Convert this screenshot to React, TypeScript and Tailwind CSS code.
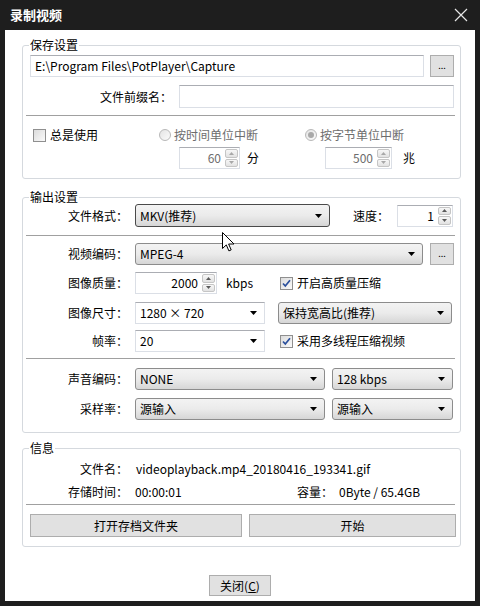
import React from "react";

function Arrow() {
  return (
    <svg width="7" height="4" viewBox="0 0 7 4" className="shrink-0">
      <path d="M0 0h7L3.5 4z" fill="#000" />
    </svg>
  );
}

function Select({ text, className, focused }: { text: string; className: string; focused?: boolean }) {
  return (
    <div
      className={`${className} h-[22px] flex items-center justify-between pl-[4px] pr-[7px] rounded-[3px] border bg-gradient-to-b from-[#f3f3f3] via-[#ebebeb] to-[#d6d6d6] ${
        focused ? "border-[#4a4a4a]" : "border-[#8c8c8c]"
      }`}
    >
      <span className="truncate">{text}</span>
      <Arrow />
    </div>
  );
}

function Combo({ text, className }: { text: string; className: string }) {
  return (
    <div className={`${className} h-[22px] flex items-center justify-between pl-[4px] pr-[7px] border border-[#dbdfe6] border-t-[#abadb3] bg-white`}>
      <span>{text}</span>
      <Arrow />
    </div>
  );
}

function SpinArrow({ up, disabled }: { up?: boolean; disabled?: boolean }) {
  return (
    <div className="flex-1 flex items-center justify-center border border-[#c5c5c5] rounded-[2px] bg-gradient-to-b from-[#f7f7f7] to-[#e2e2e2]">
      <svg width="5" height="3" viewBox="0 0 5 3">
        <path d={up ? "M0 3h5L2.5 0z" : "M0 0h5L2.5 3z"} fill={disabled ? "#a8a8a8" : "#5a5a5a"} />
      </svg>
    </div>
  );
}

function Spin({ value, className, disabled }: { value: string; className: string; disabled?: boolean }) {
  return (
    <div className={`${className} h-[22px] flex items-stretch border border-[#dbdfe6] border-t-[#abadb3] bg-white`}>
      <span className={`flex-1 flex items-center justify-end pr-[4px] ${disabled ? "text-[#6d6d6d]" : ""}`}>{value}</span>
      <div className="w-[14px] flex flex-col gap-[1px] py-[1px] pr-[1px]">
        <SpinArrow up disabled={disabled} />
        <SpinArrow disabled={disabled} />
      </div>
    </div>
  );
}

function Check({ label, checked }: { label: string; checked?: boolean }) {
  return (
    <div className="flex items-center gap-[4px]">
      <div className="w-[13px] h-[13px] border border-[#8f8f8f] bg-gradient-to-br from-[#dcdcdc] to-[#fafafa] flex items-center justify-center">
        {checked && (
          <svg width="9" height="9" viewBox="0 0 9 9">
            <path d="M1 4.5l2.3 2.5L8 1.2" stroke="#2a4f9c" strokeWidth="1.7" fill="none" />
          </svg>
        )}
      </div>
      <span>{label}</span>
    </div>
  );
}

function Radio({ label, selected }: { label: string; selected?: boolean }) {
  return (
    <div className="flex items-center gap-[3px] text-[#6d6d6d]">
      <div className="w-[12px] h-[12px] rounded-full border border-[#b8b8b8] bg-gradient-to-br from-[#e4e4e4] to-[#fbfbfb] flex items-center justify-center">
        {selected && <div className="w-[6px] h-[6px] rounded-full bg-[#a9a9a9]" />}
      </div>
      <span>{label}</span>
    </div>
  );
}

function Btn({ children, className }: { children: React.ReactNode; className: string }) {
  return (
    <div className={`${className} flex items-center justify-center border border-[#adadad] bg-[#e1e1e1]`}>{children}</div>
  );
}

function Group({ title, className, children }: { title: string; className: string; children: React.ReactNode }) {
  return (
    <div className={`${className} relative ml-[17px] mr-[14px] border border-[#d5d9de] rounded-[3px]`}>
      <span className="absolute left-[6px] top-[-9px] bg-white px-[1px] leading-[16px]">{title}</span>
      {children}
    </div>
  );
}

function Label({ text }: { text: string }) {
  return <span className="w-[105px] text-right shrink-0">{text}</span>;
}

function Sep() {
  return <div className="h-[1px] ml-[3px] mr-[5px] bg-[#a0a0a0]" />;
}

export default function App() {
  return (
    <div className="w-[480px] h-[606px] bg-[#1e1e1e] flex flex-col relative font-['Noto_Sans_CJK_SC','Noto_Sans',sans-serif] text-[12px] text-black leading-[16px]">
      {/* Title bar */}
      <div className="h-[30px] flex items-center justify-between pl-[10px] pr-[12px] text-white">
        <span className="text-[13px] font-bold">录制视频</span>
        <svg width="14" height="14" viewBox="0 0 14 14">
          <path d="M1 1l12 12M13 1L1 13" stroke="#e6e6e6" strokeWidth="1.2" />
        </svg>
      </div>

      <div className="mx-[5px] h-[571px] bg-white flex flex-col">
        {/* 保存设置 */}
        <Group title="保存设置" className="mt-[15px] h-[134px]">
          <div className="pt-[9px] flex items-center">
            <div className="ml-[7px] w-[394px] h-[22px] flex items-center pl-[4px] border border-[#dbdfe6] border-t-[#abadb3]">
              E:\Program Files\PotPlayer\Capture
            </div>
            <Btn className="ml-[6px] w-[24px] h-[22px] text-[9px]">...</Btn>
          </div>
          <div className="mt-[8px] flex items-center">
            <span className="w-[149px] text-right">文件前缀名：</span>
            <div className="ml-[7px] w-[275px] h-[23px] border border-[#dbdfe6] border-t-[#abadb3]" />
          </div>
          <div className="mt-[7px]">
            <Sep />
          </div>
          <div className="mt-[11px] h-[16px] flex items-center">
            <div className="ml-[10px] w-[126px]">
              <Check label="总是使用" />
            </div>
            <div className="w-[146px]">
              <Radio label="按时间单位中断" />
            </div>
            <Radio label="按字节单位中断" selected />
          </div>
          <div className="mt-[4px] flex items-center">
            <Spin value="60" disabled className="ml-[156px] w-[61px]" />
            <span className="ml-[7px]">分</span>
            <Spin value="500" disabled className="ml-[66px] w-[67px]" />
            <span className="ml-[11px]">兆</span>
          </div>
        </Group>

        {/* 输出设置 */}
        <Group title="输出设置" className="mt-[18px] h-[236px]">
          <div className="pt-[6px] flex items-center">
            <Label text="文件格式：" />
            <Select text="MKV(推荐)" focused className="ml-[7px] w-[195px] h-[23px]" />
            <span className="ml-[23px]">速度：</span>
            <Spin value="1" className="ml-[8px] w-[56px]" />
          </div>
          <div className="mt-[8px]">
            <Sep />
          </div>
          <div className="mt-[7px] flex items-center">
            <Label text="视频编码：" />
            <Select text="MPEG-4" className="ml-[7px] w-[288px]" />
            <Btn className="ml-[7px] w-[24px] h-[22px] text-[9px]">...</Btn>
          </div>
          <div className="mt-[7px] flex items-center">
            <Label text="图像质量：" />
            <div className="ml-[7px] w-[145px] flex items-center">
              <Spin value="2000" className="w-[82px]" />
              <span className="ml-[9px]">kbps</span>
            </div>
            <Check label="开启高质量压缩" checked />
          </div>
          <div className="mt-[8px] flex items-center">
            <Label text="图像尺寸：" />
            <Combo text="1280 × 720" className="ml-[7px] w-[130px]" />
            <Select text="保持宽高比(推荐)" className="ml-[13px] w-[174px]" />
          </div>
          <div className="mt-[6px] flex items-center">
            <Label text="帧率：" />
            <Combo text="20" className="ml-[7px] w-[130px]" />
            <div className="ml-[15px]">
              <Check label="采用多线程压缩视频" checked />
            </div>
          </div>
          <div className="mt-[6px]">
            <Sep />
          </div>
          <div className="mt-[9px] flex items-center">
            <Label text="声音编码：" />
            <Select text="NONE" className="ml-[7px] w-[190px]" />
            <Select text="128 kbps" className="ml-[7px] w-[121px]" />
          </div>
          <div className="mt-[8px] flex items-center">
            <Label text="采样率：" />
            <Select text="源输入" className="ml-[7px] w-[190px]" />
            <Select text="源输入" className="ml-[7px] w-[121px]" />
          </div>
        </Group>

        {/* 信息 */}
        <Group title="信息" className="mt-[15px] h-[99px]">
          <div className="pt-[12px] h-[28px] flex items-center">
            <Label text="文件名：" />
            <span className="ml-[8px]">videoplayback.mp4_20180416_193341.gif</span>
          </div>
          <div className="mt-[7px] h-[16px] flex items-center">
            <Label text="存储时间：" />
            <span className="ml-[7px] w-[162px]">00:00:01</span>
            <span>容量：</span>
            <span className="ml-[6px]">0Byte / 65.4GB</span>
          </div>
          <div className="mt-[4px]">
            <Sep />
          </div>
          <div className="mt-[9px] flex">
            <Btn className="ml-[7px] w-[212px] h-[23px]">打开存档文件夹</Btn>
            <Btn className="ml-[7px] w-[207px] h-[23px]">开始</Btn>
          </div>
        </Group>

        <div className="mt-[28px] flex">
          <Btn className="ml-[204px] w-[62px] h-[21px]">
            <span>
              关闭(<span className="underline">C</span>)
            </span>
          </Btn>
        </div>
      </div>

      {/* mouse pointer */}
      <svg width="13" height="20" viewBox="0 0 13 20" className="absolute left-[222px] top-[232px]">
        <path d="M0.5 0.5v16l3.8-3.6 2.6 6 2.3-1-2.6-5.9h5.4z" fill="#fff" stroke="#000" strokeWidth="1" strokeLinejoin="round" />
      </svg>
    </div>
  );
}
